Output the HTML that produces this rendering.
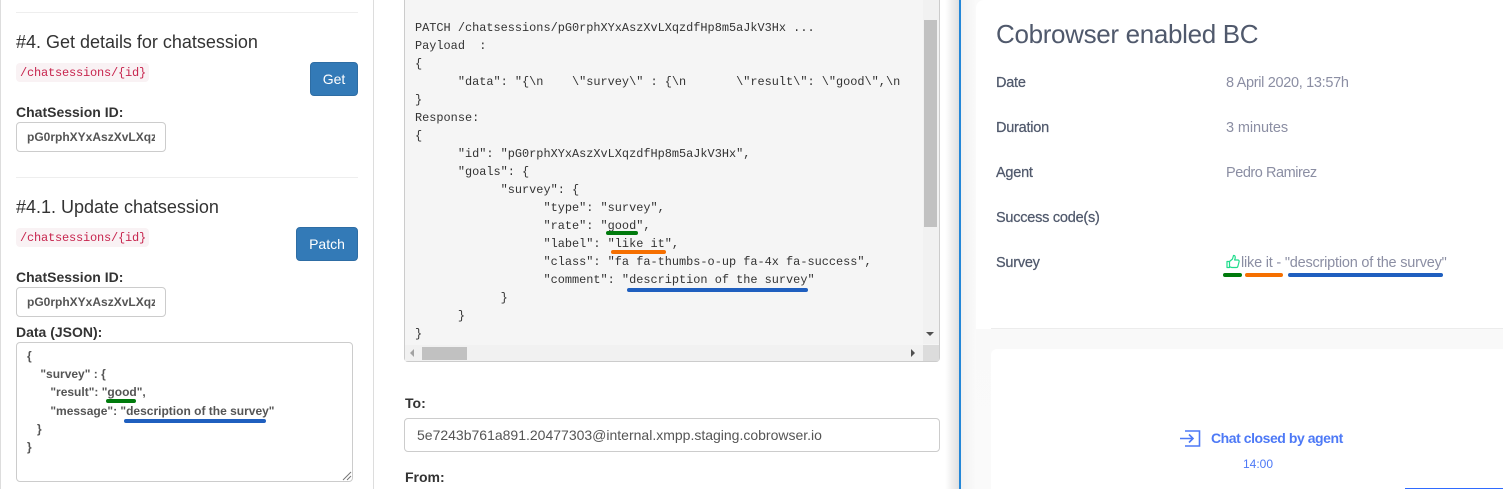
<!DOCTYPE html>
<html><head><meta charset="utf-8"><style>
html,body{margin:0;padding:0;background:#fff}
body{width:1503px;height:489px;position:relative;overflow:hidden;font-family:"Liberation Sans",sans-serif;color:#333}
div,span.a{position:absolute}
.t{white-space:pre;line-height:20px}
.h{font-size:18px;color:#333;letter-spacing:-.01px}
.l{font-size:14px;font-weight:bold;color:#333}
.code{font:12px/20px "Liberation Mono",monospace;color:#c7254e;background:#f9f2f4;border-radius:4px;height:19px;width:133px;white-space:pre;padding-left:4px;box-sizing:border-box;letter-spacing:-.2px}
.btn{background:#337ab7;border:1px solid #2e6da4;border-radius:4px;color:#fff;font-size:14px;text-align:center;line-height:32px;box-sizing:border-box;height:34px}
.inp{background:#fff;border:1px solid #ccc;border-radius:4px;box-sizing:border-box;color:#555;font-size:12px;font-weight:bold;overflow:hidden;white-space:pre}
.hr{background:#eee;height:1px}
.m{font:11.9px/18px "Liberation Mono",monospace;color:#333;white-space:pre}
.j{font:bold 12px/18.2px "Liberation Sans",sans-serif;color:#555;white-space:pre}
.bar{border-radius:2px;height:4px}
.g{background:#007a0c}.o{background:#f56f00}.b{background:#1f5fbf}
.k{font-size:14.5px;color:#50596c;font-weight:normal;-webkit-text-stroke:.25px #50596c;letter-spacing:-.24px;white-space:pre;line-height:20px}
.v{font-size:14.5px;color:#8b8ea3;white-space:pre;line-height:20px}
</style></head><body>

<!-- left column -->
<div style="left:0;top:0;width:1px;height:489px;background:#ddd"></div>
<div style="left:373px;top:0;width:1px;height:489px;background:#ddd"></div>
<div class="hr" style="left:16px;top:12px;width:342px"></div>
<div class="t h" style="left:16px;top:32px">#4. Get details for chatsession</div>
<div class="code" style="left:16px;top:63px">/chatsessions/{id}</div>
<div class="btn" style="left:310px;top:62px;width:48px">Get</div>
<div class="t l" style="left:16px;top:102px">ChatSession ID:</div>
<div class="inp" style="left:16px;top:122px;width:150px;height:30px;line-height:28px"><div style="left:10px;top:0;width:128px;height:28px;overflow:hidden">pG0rphXYxAszXvLXqzdfHp8m5aJkV3Hx</div></div>
<div class="hr" style="left:16px;top:177px;width:342px"></div>
<div class="t h" style="left:16px;top:197px">#4.1. Update chatsession</div>
<div class="code" style="left:16px;top:228px">/chatsessions/{id}</div>
<div class="btn" style="left:296px;top:227px;width:62px">Patch</div>
<div class="t l" style="left:16px;top:267px">ChatSession ID:</div>
<div class="inp" style="left:16px;top:287px;width:150px;height:30px;line-height:28px"><div style="left:10px;top:0;width:128px;height:28px;overflow:hidden">pG0rphXYxAszXvLXqzdfHp8m5aJkV3Hx</div></div>
<div class="t l" style="left:16px;top:322px">Data (JSON):</div>
<div style="left:16px;top:342px;width:337px;height:140px;border:1px solid #ccc;border-radius:4px;box-sizing:border-box;background:#fff"></div>
<div class="j" style="left:27px;top:347px">{
    "survey" : {
       "result": "good",
       "message": "description of the survey"
   }
}</div>
<svg style="position:absolute;left:342px;top:471px" width="10" height="10"><path d="M1 9L9 1M5 9L9 5" stroke="#777" stroke-width="1" fill="none"/></svg>
<div class="bar g" style="left:106px;top:399px;width:30px"></div>
<div class="bar b" style="left:124px;top:419px;width:142px"></div>

<!-- middle column -->
<div style="left:404px;top:-5px;width:536px;height:367px;background:#f5f5f5;border:1px solid #ccc;border-radius:4px;box-sizing:border-box"></div>
<div class="m" style="left:415px;top:19px">PATCH /chatsessions/pG0rphXYxAszXvLXqzdfHp8m5aJkV3Hx ...
Payload  :
{
      "data": "{\n    \"survey\" : {\n       \"result\": \"good\",\n
}
Response:
{
      "id": "pG0rphXYxAszXvLXqzdfHp8m5aJkV3Hx",
      "goals": {
            "survey": {
                  "type": "survey",
                  "rate": "good",
                  "label": "like it",
                  "class": "fa fa-thumbs-o-up fa-4x fa-success",
                  "comment": "description of the survey"
            }
      }
}</div>
<div style="left:923px;top:0;width:16px;height:344px;background:#f1f1f1"></div>
<div style="left:924px;top:20px;width:13px;height:207px;background:#c1c1c1"></div>
<svg style="position:absolute;left:926px;top:332px" width="9" height="6"><path d="M0 0H8L4 4Z" fill="#505050"/></svg>
<div style="left:405px;top:345px;width:518px;height:16px;background:#f1f1f1"></div>
<div style="left:923px;top:345px;width:16px;height:16px;background:#dcdcdc"></div>
<div style="left:422px;top:347px;width:45px;height:13px;background:#c1c1c1"></div>
<svg style="position:absolute;left:410px;top:349px" width="6" height="9"><path d="M4 0V8L0 4Z" fill="#a3a3a3"/></svg>
<svg style="position:absolute;left:911px;top:349px" width="6" height="9"><path d="M0 0V8L4 4Z" fill="#505050"/></svg>
<div class="bar g" style="left:606px;top:231px;width:32px"></div>
<div class="bar o" style="left:611px;top:250px;width:55px"></div>
<div class="bar b" style="left:627px;top:288px;width:181px"></div>
<div class="t l" style="left:405px;top:393px">To:</div>
<div class="inp" style="left:404px;top:418px;width:536px;height:34px;padding:0 12px;line-height:32px;font-size:14px;font-weight:normal">5e7243b761a891.20477303@internal.xmpp.staging.cobrowser.io</div>
<div class="t l" style="left:405px;top:467px">From:</div>

<!-- right panel -->
<div style="left:945px;top:0;width:14px;height:489px;background:linear-gradient(90deg,#fff,#e0e0e0)"></div>
<div style="left:959px;top:0;width:2px;height:489px;background:#2487d8"></div>
<div style="left:961px;top:0;width:542px;height:489px;background:linear-gradient(90deg,#f1f1f1,#fafafa 15px)"></div>
<div style="left:976px;top:0;width:527px;height:329px;background:#fff;border-radius:8px 0 0 0"></div>
<div style="left:991px;top:328px;width:512px;height:1px;background:#ececec"></div>
<div style="left:976px;top:329px;width:527px;height:160px;background:linear-gradient(180deg,#f9f9f9,#fafafa)"></div>
<div style="left:991px;top:349px;width:512px;height:140px;background:#fff;border-radius:6px 0 0 0"></div>

<div class="t" style="left:996px;top:18px;font-size:26px;line-height:32px;color:#50596c;letter-spacing:-.33px">Cobrowser enabled BC</div>
<div class="k" style="left:996px;top:73px">Date</div>
<div class="v" style="left:1226px;top:73px;letter-spacing:-.32px">8 April 2020, 13:57h</div>
<div class="k" style="left:996px;top:118px">Duration</div>
<div class="v" style="left:1226px;top:118px;letter-spacing:-.1px">3 minutes</div>
<div class="k" style="left:996px;top:163px">Agent</div>
<div class="v" style="left:1226px;top:163px;letter-spacing:-.46px">Pedro Ramirez</div>
<div class="k" style="left:996px;top:208px">Success code(s)</div>
<div class="k" style="left:996px;top:253px">Survey</div>
<svg style="position:absolute;left:1226px;top:254px" width="14" height="15" viewBox="0 0 14 15"><path d="M1 7.5H3.5V13.5H1ZM3.5 7.5L6.5 5L7.5 1.5C9 1.2 9.6 2.6 9 5L8.6 6H12C13 6 13.4 7 13 8L11.8 12.6C11.6 13.3 11 13.5 10.4 13.5H6C5 13.5 4.4 13 3.5 12.6" fill="none" stroke="#1fdc8c" stroke-width="1.2" stroke-linejoin="round"/></svg>
<div class="v" style="left:1241px;top:253px;letter-spacing:-.21px">like it - "description of the survey"</div>
<div class="bar g" style="left:1223px;top:273px;width:19px"></div>
<div class="bar o" style="left:1245px;top:273px;width:38px"></div>
<div class="bar b" style="left:1288px;top:273px;width:155px"></div>

<svg style="position:absolute;left:1179px;top:430px" width="22" height="17" viewBox="0 0 22 17"><path d="M6 1H20.5V16H6M1 8.5H14M10 4.5L14 8.5L10 12.5" fill="none" stroke="#4d79f6" stroke-width="1.6"/></svg>
<div class="t" style="left:1211px;top:428px;font-size:14px;font-weight:bold;color:#4d79f6;letter-spacing:-.45px">Chat closed by agent</div>
<div class="t" style="left:1243px;top:454px;font-size:12px;color:#4d79f6">14:00</div>
<div style="left:1405px;top:488px;width:98px;height:1px;background:#2f6bff"></div>
</body></html>
